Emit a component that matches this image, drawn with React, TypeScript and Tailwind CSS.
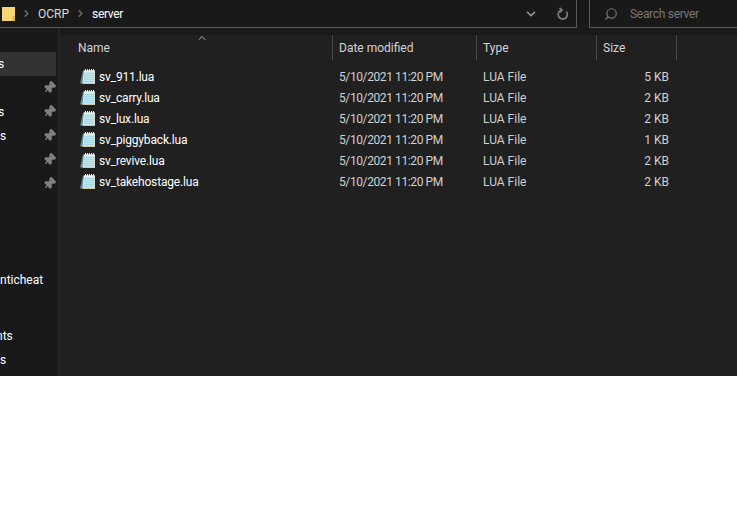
import { Pin, ChevronDown, ChevronRight, ChevronUp, Search } from 'lucide-react';

const files = [
  { name: 'sv_911.lua', size: '5 KB' },
  { name: 'sv_carry.lua', size: '2 KB' },
  { name: 'sv_lux.lua', size: '2 KB' },
  { name: 'sv_piggyback.lua', size: '1 KB' },
  { name: 'sv_revive.lua', size: '2 KB' },
  { name: 'sv_takehostage.lua', size: '2 KB' },
];

function NotepadIcon() {
  return (
    <svg width="16" height="17" viewBox="0 0 16 17" className="shrink-0">
      <path d="M3 2.5h2.5v13H0z" fill="#5f8794" />
      <path d="M4.5 2.5h10.5v13.5H2.5z" fill="#cfc9a8" />
      <path d="M4 2.5h10.5v12.5H2.5z" fill="#e8f6f8" />
      <path d="M4.5 4.5h9.5v10H3.2z" fill="#a5d8e6" />
      <path d="M4.4 6.5h9.6M4.2 8.5h9.8M4 10.5h10M3.8 12.5h10.2" stroke="#c6e8ef" strokeWidth="0.8" />
      <path d="M5.5 1v3M7.5 1v3M9.5 1v3M11.5 1v3M13.5 1v3" stroke="#eeeeee" strokeWidth="1" />
    </svg>
  );
}

function FolderIcon() {
  return (
    <svg width="14" height="16" viewBox="0 0 14 16" className="ml-[2px] shrink-0">
      <path d="M0 1h13v14H0z" fill="#f7d774" />
      <path d="M10.5 10h2.5v5h-2.5z" fill="#e3b64c" />
    </svg>
  );
}

function RefreshIcon() {
  return (
    <svg width="14" height="14" viewBox="0 0 14 14" fill="none" stroke="#7d7d7d" strokeWidth="1.7" className="mr-[7px] shrink-0">
      <path d="M6.5 3a4.6 4.6 0 1 0 5 1.8" />
      <path d="M4.5 0.8L7 3L4.8 5.4" />
    </svg>
  );
}

function SideRow({ text, offset, pinned, selected }: { text?: string; offset?: string; pinned?: boolean; selected?: boolean }) {
  return (
    <div className={`h-6 w-[56px] flex items-center ${selected ? 'bg-[#333333]' : ''}`}>
      <div className={`w-[42px] shrink-0 whitespace-nowrap text-white ${offset ?? ''}`}>{text}</div>
      {pinned && <Pin size={13} strokeWidth={2.4} className="mt-[-2px] text-[#808080] rotate-45 fill-[#808080]" />}
    </div>
  );
}

export default function App() {
  return (
    <div className="w-[737px] h-[376px] flex flex-col overflow-hidden bg-[#191919] text-[12px] font-['Roboto','Open_Sans',sans-serif] text-[#e6e6e6]">
      {/* address bar */}
      <div className="h-[28px] flex shrink-0">
        <div className="w-[577px] flex items-center border-b border-r border-[#595959]">
          <FolderIcon />
          <ChevronRight size={11} strokeWidth={3} className="ml-[5px] text-[#707070]" />
          <span className="ml-[6px] w-[32px] text-[#d9d9d9]">OCRP</span>
          <ChevronRight size={11} strokeWidth={3} className="ml-[5px] text-[#707070]" />
          <span className="ml-[6px] text-white tracking-[-0.3px]">server</span>
          <div className="flex-1" />
          <ChevronDown size={14} strokeWidth={2.6} className="mr-[17px] text-[#9a9a9a]" />
          <RefreshIcon />
        </div>
        <div className="w-[12px]" />
        <div className="flex-1 flex items-center border-b border-l border-[#595959] pl-[14px] text-[#777777]">
          <Search size={14} className="-scale-x-100 text-[#777777]" />
          <span className="ml-[12px] tracking-[-0.3px]">Search server</span>
        </div>
      </div>

      <div className="flex-1 flex min-h-0">
        {/* nav pane */}
        <div className="w-[58px] shrink-0 pt-[24px] overflow-hidden">
          <SideRow text="s" selected offset="ml-[-2px] mr-[1px]" />
          <SideRow pinned offset="ml-[1px]" />
          <SideRow text="s" pinned offset="ml-[-2px] mr-[3px]" />
          <SideRow text="ts" pinned offset="ml-[-4px] mr-[5px]" />
          <SideRow pinned offset="ml-[1px]" />
          <SideRow pinned offset="ml-[1px]" />
          <div className="h-[72px]" />
          <SideRow text="nticheat" />
          <div className="h-[32px]" />
          <SideRow text="nts" offset="ml-[-4px]" />
          <SideRow text="ts" offset="ml-[-4px]" />
        </div>
        <div className="w-[2px] shrink-0 bg-[#252525]" />

        {/* file list */}
        <div className="flex-1 flex flex-col min-w-0">
          <div className="h-[7px] shrink-0" />
          <div className="flex-1 bg-[#202020] relative">
            <ChevronUp size={12} className="absolute left-[136px] top-[-3px] text-[#b0b0b0]" />
            <div className="h-[25px] flex text-[#d4d4d4]">
              <div className="w-[273px] pl-[18px] border-r border-[#4a4a4a] flex items-center">Name</div>
              <div className="w-[144px] pl-[6px] border-r border-[#4a4a4a] flex items-center">Date modified</div>
              <div className="w-[120px] pl-[6px] border-r border-[#4a4a4a] flex items-center">Type</div>
              <div className="w-[80px] pl-[6px] border-r border-[#4a4a4a] flex items-center">Size</div>
            </div>
            <div className="pt-[6px]">
              {files.map((f) => (
                <div key={f.name} className="h-[21px] flex items-center">
                  <div className="w-[273px] pl-[20px] flex items-center gap-[3px] text-white">
                    <NotepadIcon />
                    <span className="tracking-[-0.17px]">{f.name}</span>
                  </div>
                  <div className="w-[144px] pl-[6px] text-[#d0d0d0] tracking-[-0.4px]">5/10/2021 11:20 PM</div>
                  <div className="w-[120px] pl-[6px] text-[#d0d0d0]">LUA File</div>
                  <div className="w-[72px] text-right text-[#d0d0d0]">{f.size}</div>
                </div>
              ))}
            </div>
          </div>
        </div>
      </div>
    </div>
  );
}
